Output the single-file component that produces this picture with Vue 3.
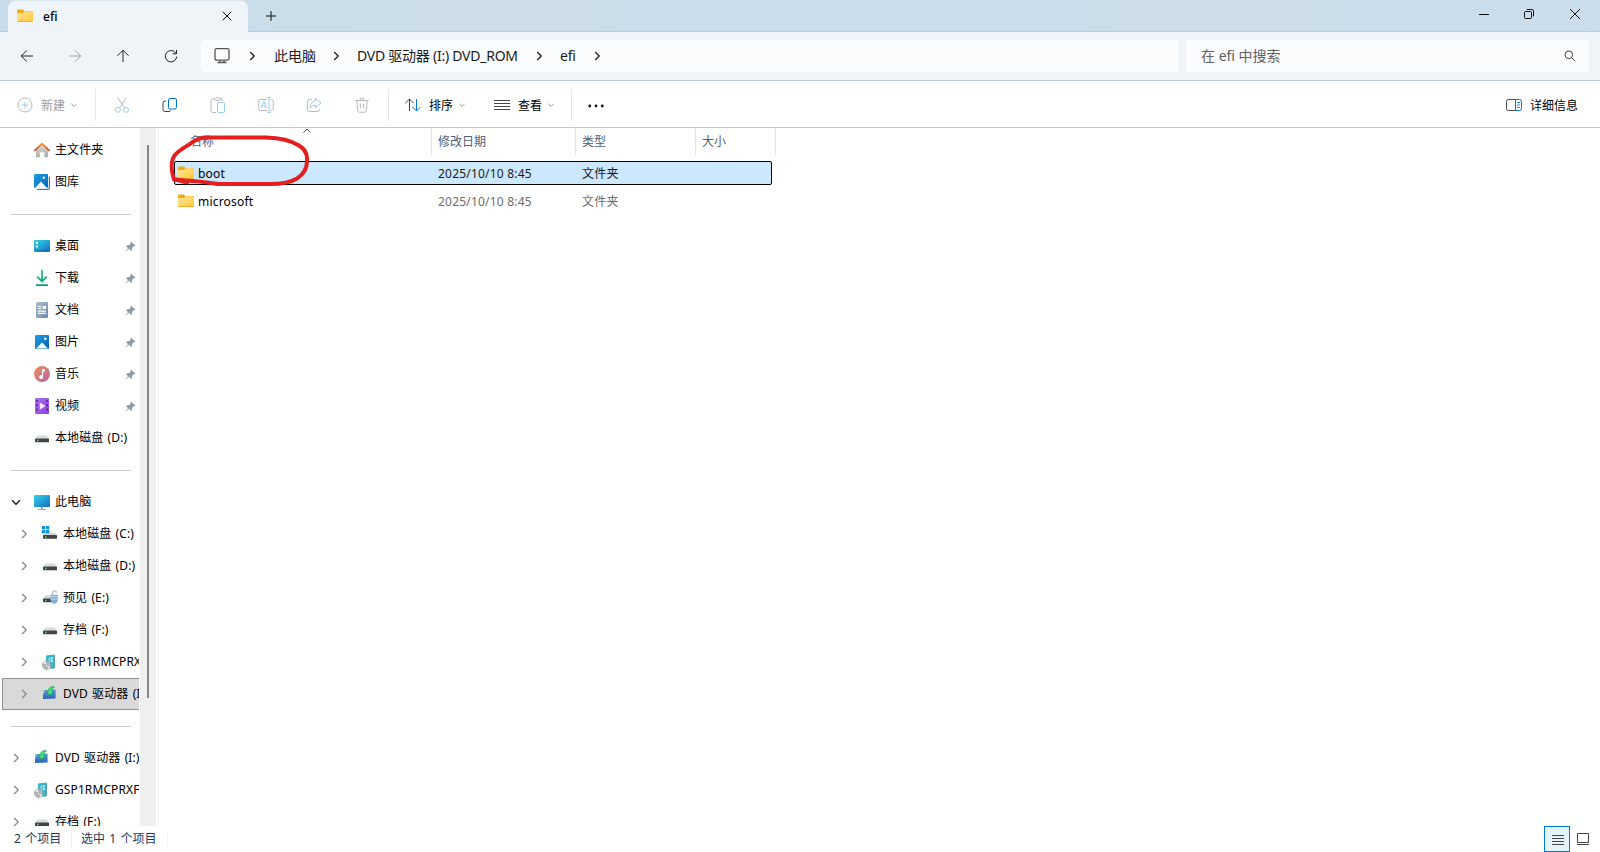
<template>
  <div class="explorer">
    <svg class="sprite" aria-hidden="true">
      <defs>
        <linearGradient id="g-folder" x1="0" y1="0" x2="1" y2="1">
          <stop offset="0" stop-color="#ffe59a" />
          <stop offset="1" stop-color="#ffc938" />
        </linearGradient>
        <linearGradient id="g-blue" x1="0" y1="0" x2="1" y2="1">
          <stop offset="0" stop-color="#35d3e6" />
          <stop offset="1" stop-color="#1270c0" />
        </linearGradient>
        <linearGradient id="g-pic" x1="0" y1="0" x2="1" y2="1">
          <stop offset="0" stop-color="#1e9fe8" />
          <stop offset="1" stop-color="#0563b4" />
        </linearGradient>
        <linearGradient id="g-house" x1="0" y1="0" x2="0" y2="1">
          <stop offset="0" stop-color="#dedede" />
          <stop offset="1" stop-color="#a9a9ad" />
        </linearGradient>
        <linearGradient id="g-roof" x1="0" y1="0" x2="0" y2="1">
          <stop offset="0" stop-color="#f29a1f" />
          <stop offset="1" stop-color="#d0491d" />
        </linearGradient>
        <linearGradient id="g-music" x1="0" y1="0" x2="1" y2="1">
          <stop offset="0" stop-color="#f0935a" />
          <stop offset="1" stop-color="#b9609f" />
        </linearGradient>
        <linearGradient id="g-doc" x1="0" y1="0" x2="1" y2="1">
          <stop offset="0" stop-color="#abc1d8" />
          <stop offset="1" stop-color="#6b88a8" />
        </linearGradient>
        <linearGradient id="g-video" x1="0" y1="0" x2="1" y2="1">
          <stop offset="0" stop-color="#b06ef0" />
          <stop offset="1" stop-color="#8745dc" />
        </linearGradient>
        <linearGradient id="g-down" x1="0" y1="0" x2="0" y2="1">
          <stop offset="0" stop-color="#2cc391" />
          <stop offset="1" stop-color="#0e9d86" />
        </linearGradient>
        <linearGradient id="g-dvd" x1="0" y1="0" x2="0" y2="1">
          <stop offset="0" stop-color="#5b9be0" />
          <stop offset="1" stop-color="#2f62b5" />
        </linearGradient>
      </defs>

      <symbol id="i-folder" viewBox="0 0 16 16">
        <path d="M0 2.700a1.200 1.200 0 0 1 1.200-1.200h4.600L7.600 3h7.200A1.200 1.200 0 0 1 16 4.200V8H0z" fill="#f3ab10" />
        <path d="M0 6a1 1 0 0 1 1-1h5l1.700-1.700h7.200A1.100 1.100 0 0 1 16 4.400V12.700a1.200 1.200 0 0 1-1.200 1.200H1.200A1.200 1.200 0 0 1 0 12.700z" fill="url(#g-folder)" />
        <path d="M.2 13.300q.4.700 1 .7h13.600q.7 0 1-.7z" fill="#e5a323" />
      </symbol>
      <symbol id="i-home" viewBox="0 0 16 16">
        <path d="M2 7.300 8 2l6 5.300v7.200a.8.8 0 0 1-.8.8h-2.900v-5H5.800v5H2.800a.8.8 0 0 1-.8-.8z" fill="url(#g-house)" />
        <path d="M.9 8.300 8 1.600l7.100 6.700" fill="none" stroke="url(#g-roof)" stroke-width="1.800" stroke-linecap="round" stroke-linejoin="round" />
      </symbol>
      <symbol id="i-gallery" viewBox="0 0 16 16">
        <path d="M14 2.400h1a1 1 0 0 1 1 1V14a2 2 0 0 1-2 2H4a1 1 0 0 1-1-1v-.6h11z" fill="#2b76b8" />
        <rect width="14" height="14" rx="1" fill="url(#g-pic)" />
        <path d="M14.500 2v12.400H3" fill="none" stroke="#fff" stroke-width=".8" />
        <path d="m1 14 6-6.600L13 14z" fill="#f4faff" />
        <circle cx="9.800" cy="3.800" r="1.200" fill="#fff" />
      </symbol>
      <symbol id="i-desktop" viewBox="0 0 16 16">
        <rect y="2" width="16" height="12" rx="1" fill="url(#g-blue)" />
        <path d="M2 4h2v2H2zm0 3.500h2v2H2z" fill="#e9fbff" />
        <path d="M.8 12.600h14.400" stroke="#155c92" stroke-width="1" stroke-dasharray="1.400 1" />
      </symbol>
      <symbol id="i-download" viewBox="0 0 16 16">
        <path d="M8 0v11M3.200 6.700 8 11.400l4.800-4.700M2 15.100h12" fill="none" stroke="url(#g-down)" stroke-width="1.800" />
      </symbol>
      <symbol id="i-document" viewBox="0 0 16 16">
        <rect x="2" width="12" height="16" rx="1.200" fill="url(#g-doc)" />
        <path d="M4 4h3.400v1H4zm0 2h3.400v1H4zm4.800-2H12v3H8.800zM4 8.600h8v1.100H4zm0 2.200h8v1.100H4z" fill="#fff" />
      </symbol>
      <symbol id="i-picture" viewBox="0 0 16 16">
        <rect x="1" y="1" width="14" height="14" rx="1" fill="url(#g-pic)" />
        <path d="m2 14.600 6-6.200 6 6.200z" fill="#f4faff" />
        <circle cx="11.300" cy="4.700" r="1.300" fill="#fff" />
      </symbol>
      <symbol id="i-music" viewBox="0 0 16 16">
        <circle cx="8" cy="8" r="8" fill="url(#g-music)" />
        <path d="M8 3.200h3v2.200H9.200V11a2 2 0 1 1-1.200-1.800z" fill="#fff" />
      </symbol>
      <symbol id="i-video" viewBox="0 0 16 16">
        <rect x="1" width="14" height="16" rx="1" fill="url(#g-video)" />
        <path d="M3 2v13M13 2v13" stroke="#4b2392" stroke-width="1.600" stroke-dasharray="2 2.300" />
        <path d="M5.800 4.500 11.600 8l-5.800 3.600z" fill="#f5ecff" />
      </symbol>
      <symbol id="i-drive" viewBox="0 0 16 16">
        <path d="M3.500 5.500h9L15 9H1z" fill="#d9dadb" />
        <rect x="1" y="8.500" width="14" height="3.700" rx=".6" fill="#424446" />
        <path d="M3 9.800h1.500v1.500H3z" fill="#35e36a" />
      </symbol>
      <symbol id="i-system" viewBox="0 0 16 16">
        <path d="M3 6.500h10L15 9.500H1z" fill="#d3d5d6" />
        <rect x="1" y="9" width="14" height="3.700" rx=".6" fill="#424446" />
        <path d="M3 10.300h1.500v1.500H3z" fill="#35e36a" />
        <path d="M0 0h3.300v3.300H0zm4 0h3.300v3.300H4zM0 4h3.300v3.300H0zm4 0h3.300v3.300H4z" fill="#0f8fe0" />
      </symbol>
      <symbol id="i-locked" viewBox="0 0 16 16">
        <path d="M3.500 5.500h9L14 9H1z" fill="#cfd1d3" />
        <rect x="1" y="8.500" width="11" height="3.700" rx=".6" fill="#424446" />
        <path d="M3 9.800h1.500v1.500H3z" fill="#35e36a" />
        <path d="M10.500 5V2.800a2 2 0 0 1 4 0" fill="none" stroke="#b4bdc6" stroke-width="1.200" />
        <path d="M8.500 4.800H16V9q0 3.500-3.800 5Q8.500 12.500 8.500 9z" fill="#78afd9" />
        <path d="M8.500 6.500H16M8.500 9H16" stroke="#d9e9f4" stroke-width=".8" />
      </symbol>
      <symbol id="i-pc" viewBox="0 0 16 16">
        <rect y="1" width="16" height="12" rx=".8" fill="url(#g-blue)" />
        <path d="M7 13h2v2h3v1H4v-1h3z" fill="#9ba9b5" />
      </symbol>
      <symbol id="i-disc" viewBox="0 0 16 16">
        <path d="M4 1.500 12 .5v14L4 15z" fill="#3bb5cb" />
        <path d="m12 .5.8 1v12.600l-.8.400z" fill="#1f86a4" />
        <path d="m6.500 4 2-.4v2l-2 .4zm2.500-.5 2-.4v2.200l-2 .4zM6.500 6.500l2-.3v2l-2 .3zm2.500-.4 2-.3V8l-2 .3z" fill="#9ce6ef" />
        <circle cx="4.700" cy="11.200" r="4.200" fill="#b5b9bd" stroke="#8a8f94" stroke-width=".6" />
        <path d="m4.700 11.200-3.500-2.300 2-1.700z" fill="#f5f6f7" />
        <path d="m4.700 11.200 3.700 1.800-1.800 2z" fill="#e9ebed" />
        <circle cx="4.700" cy="11.200" r="1.200" fill="#fff" stroke="#777" stroke-width=".6" />
      </symbol>
      <symbol id="i-dvd" viewBox="0 0 16 16">
        <path d="M1 4.500 13.600 3.500v9L1 13z" fill="url(#g-dvd)" />
        <path d="M1 4.500 3.500 4.300 1 9z" fill="#8cbcee" />
        <path d="M11.500.5Q7 .5 6.200 4.800L4 4.600 7.500 9.300l4.700-4-2.400-.2Q9.500 2 12.500 1.200z" fill="#3fe07a" stroke="#18a149" stroke-width=".7" />
      </symbol>
      <symbol id="i-pin" viewBox="0 0 12 12">
        <path d="m7 .8 4.200 4.200-1 .9-.8-.1-1.700 1.700-.2 2.300-1 1-2.400-2.300L.9 11.400.6 11.200l2.700-3.400L1.200 5.500l1-1 2.400-.2L6.200 2.600 6.100 1.700z" fill="#939ca6" />
      </symbol>
      <symbol id="i-right" viewBox="0 0 10 10">
        <path d="m3.200 1 4 4-4 4" fill="none" stroke="currentColor" stroke-width="1.300" />
      </symbol>
      <symbol id="i-down" viewBox="0 0 10 10">
        <path d="m1 3.200 4 4 4-4" fill="none" stroke="currentColor" stroke-width="1.500" />
      </symbol>
      <symbol id="i-small-down" viewBox="0 0 6 6">
        <path d="m.4 1.800 2.600 2.600 2.600-2.600" fill="none" stroke="#999" stroke-width="1" />
      </symbol>
    </svg>

    <header class="titlebar">
      <div class="tab">
        <svg class="icon"><use href="#i-folder" /></svg>
        <span class="tab-title">efi</span>
        <svg class="tab-close" viewBox="0 0 10 10"><path d="m.7.7 8.600 8.600m0-8.600L.7 9.300" /></svg>
      </div>
      <svg class="tab-add" viewBox="0 0 10 10"><path d="M5 0v10M0 5h10" /></svg>
      <div class="window-buttons">
        <svg viewBox="0 0 12 12"><path d="M1 6.500h10" /></svg>
        <svg viewBox="0 0 12 12">
          <rect x="1.500" y="3.500" width="7" height="7" rx="1" />
          <path d="M3.800 1.500h5a1.700 1.700 0 0 1 1.700 1.700v5.200" />
        </svg>
        <svg viewBox="0 0 12 12"><path d="m1 1 10 10M11 1 1 11" /></svg>
      </div>
    </header>

    <nav class="navbar">
      <div class="nav-buttons">
        <svg viewBox="0 0 14 14"><path d="M13 7H1.200m5.600-5.600L1.200 7l5.600 5.600" /></svg>
        <svg class="muted" viewBox="0 0 14 14"><path d="M1 7h11.800M7.200 1.400 12.800 7l-5.600 5.600" /></svg>
        <svg viewBox="0 0 14 14"><path d="M7 13V1.200M1.400 6.800 7 1.200l5.600 5.600" /></svg>
        <svg viewBox="0 0 14 14"><path d="M12.700 7.500A5.700 5.700 0 1 1 11.300 3.500L12.500 4.800M12.500 1v3.800H8.700" /></svg>
      </div>
      <div class="address">
        <svg class="monitor" viewBox="0 0 16 16">
          <rect x="1" y=".7" width="14" height="11.500" rx="1.500" />
          <path d="M6 12.500v2M10 12.500v2M3.500 14.500h9" />
        </svg>
        <svg class="sep"><use href="#i-right" /></svg>
        <span class="crumb-pc">此电脑</span>
        <svg class="sep"><use href="#i-right" /></svg>
        <span class="crumb-dvd">DVD 驱动器 (I:) DVD_ROM</span>
        <svg class="sep"><use href="#i-right" /></svg>
        <span class="crumb-efi">efi</span>
        <svg class="sep"><use href="#i-right" /></svg>
      </div>
      <div class="search">
        <span>在 efi 中搜索</span>
        <svg viewBox="0 0 12 12"><circle cx="4.800" cy="4.800" r="3.800" /><path d="m7.600 7.600 3.800 3.800" /></svg>
      </div>
    </nav>

    <div class="toolbar">
      <div class="tool-new">
        <svg class="tool" viewBox="0 0 16 16">
          <circle cx="8" cy="8" r="7" class="gray" /><path d="M8 4.500v7M4.500 8h7" class="pale" />
        </svg>
        <span>新建</span>
        <svg class="caret"><use href="#i-small-down" /></svg>
      </div>
      <div class="tool-group">
        <svg class="tool" viewBox="0 0 16 16">
          <path d="m3.500.5 6.800 10M12.500.5l-6.800 10" class="gray" />
          <circle cx="3.900" cy="12.800" r="2.500" class="pale" /><circle cx="12.100" cy="12.800" r="2.500" class="pale" />
        </svg>
        <svg class="tool" viewBox="0 0 16 16">
          <path d="M4 4H3a2 2 0 0 0-2 2v6.500a2 2 0 0 0 2 2h4a2 2 0 0 0 1.800-1.200" class="dark" />
          <rect x="6.500" y="1.500" width="8" height="10.500" rx="1.500" class="blue" />
        </svg>
        <svg class="tool" viewBox="0 0 16 16">
          <path d="M5 2H2.500A1.500 1.500 0 0 0 1 3.500V14a1.500 1.500 0 0 0 1.500 1.500H6M10 2h1.500a1.200 1.200 0 0 1 1.200 1.200V4" class="gray" />
          <rect x="4.500" y=".7" width="6" height="2.600" rx="1.200" class="gray" />
          <rect x="7.500" y="5.500" width="7" height="10" rx=".8" class="pale" />
        </svg>
        <svg class="tool" viewBox="0 0 16 16">
          <path d="M9 2.500H2.500A1.800 1.800 0 0 0 .7 4.300v7.400a1.800 1.800 0 0 0 1.800 1.800H9M13 2.500q2.300 0 2.300 2v7q0 2-2.300 2" class="gray" />
          <path d="m3 11 2.800-6.500L8.600 11M4 9h3.800M11 .7v14.600M9 .7h4M9 15.300h4" class="pale" />
        </svg>
        <svg class="tool" viewBox="0 0 16 16">
          <path d="M6 2.500H3.500a2 2 0 0 0-2 2v8a2 2 0 0 0 2 2h8a2 2 0 0 0 2-2V12" class="gray" />
          <path d="M9.500 1.300 15 6l-5.500 4.700V8q-3.500 0-5.500 3Q4.300 4.500 9.500 4z" class="pale" />
        </svg>
        <svg class="tool" viewBox="0 0 16 16">
          <path d="M1.300 3.500h13.400M5.800 3.300q0-2.200 2.200-2.200t2.200 2.200M2.800 3.500l.9 10q.1 1.700 1.600 1.700h5.400q1.500 0 1.600-1.700l.9-10M6.300 6.500v5M9.700 6.500v5" class="gray" />
        </svg>
      </div>
      <div class="tool-view">
        <svg class="tool" viewBox="0 0 16 16">
          <path d="M4.500 14V2M.3 6.200 4.500 2l4.200 4.200" class="dark" />
          <path d="M11.500 2v12M7.500 10l4 4 4-4" class="blue" />
        </svg>
        <span class="sort-label">排序</span>
        <svg class="caret"><use href="#i-small-down" /></svg>
        <svg class="tool lines" viewBox="0 0 16 16">
          <path d="M0 3.500h16M0 6.500h16M0 9.500h16M0 12.500h16" class="dark" />
        </svg>
        <span class="sort-label">查看</span>
        <svg class="caret"><use href="#i-small-down" /></svg>
      </div>
      <svg class="dots" viewBox="0 0 16 4">
        <circle cx="1.700" cy="2" r="1.400" /><circle cx="8" cy="2" r="1.400" /><circle cx="14.300" cy="2" r="1.400" />
      </svg>
      <div class="details">
        <svg class="tool" viewBox="0 0 16 16">
          <path d="M9.500 2.500h-7a2 2 0 0 0-2 2v7a2 2 0 0 0 2 2h7" class="dark" />
          <path d="M9.500 2.500h4a2 2 0 0 1 2 2v7a2 2 0 0 1-2 2h-4zM11.300 5.500h2.500M11.300 8h2.500M11.300 10.500h2.500" class="blue" />
        </svg>
        <span>详细信息</span>
      </div>
    </div>

    <main class="body">
      <aside class="sidebar">
        <div class="tree">
          <template v-for="(item, i) in tree" :key="i">
            <div v-if="item.divider" class="divider"><i></i></div>
            <div v-else :class="['node', { nested: item.nested, selected: item.selected }]">
              <span class="arrow">
                <svg v-if="item.arrow" :class="{ open: item.arrow === 'down' }"><use :href="'#i-' + item.arrow" /></svg>
              </span>
              <svg class="icon"><use :href="'#i-' + item.icon" /></svg>
              <span class="node-label">{{ item.label }}</span>
              <svg v-if="item.pinned" class="pin"><use href="#i-pin" /></svg>
            </div>
          </template>
        </div>
        <div class="scrollbar"><div class="thumb"></div></div>
      </aside>

      <section class="files">
        <div class="columns">
          <span>名称</span>
          <span>修改日期</span>
          <span>类型</span>
          <span>大小</span>
          <svg class="sort-mark" viewBox="0 0 8 5"><path d="M.5 4.500 4 1l3.500 3.500" /></svg>
        </div>
        <div v-for="file in files" :key="file.name" :class="['file', { active: file.active }]">
          <span class="file-name">
            <svg class="icon"><use href="#i-folder" /></svg>
            <span>{{ file.name }}</span>
          </span>
          <span class="file-meta">{{ file.date }}</span>
          <span class="file-meta">{{ file.type }}</span>
        </div>
        <svg class="ink" viewBox="0 0 144 56">
          <path d="M5.500 49C3 40 3 31 7 26C12 20 18 18 24 13.500Q31 8.500 38 8.500L98 8.500Q119 9 131 16.500Q140 22 139 32Q139 43 129 49.500Q119 55.500 100 55L50 55Q31 52 17 51.500L6 50.500" />
          <path d="M8 50.500 19 53.500" />
        </svg>
      </section>
    </main>

    <footer class="status">
      <span class="count">2 个项目</span>
      <span class="picked">选中 1 个项目</span>
      <div class="modes">
        <span class="mode on"><svg viewBox="0 0 12 12"><path d="M0 1.500h12M0 4.500h12M0 7.500h12M0 10.500h12" /></svg></span>
        <span class="mode"><svg viewBox="0 0 12 12"><path d="M.5.5h11v9H.5zM0 11.500h12" /></svg></span>
      </div>
    </footer>
  </div>
</template>

<script setup>
const tree = [
  { label: '主文件夹', icon: 'home' },
  { label: '图库', icon: 'gallery' },
  { divider: true },
  { label: '桌面', icon: 'desktop', pinned: true },
  { label: '下载', icon: 'download', pinned: true },
  { label: '文档', icon: 'document', pinned: true },
  { label: '图片', icon: 'picture', pinned: true },
  { label: '音乐', icon: 'music', pinned: true },
  { label: '视频', icon: 'video', pinned: true },
  { label: '本地磁盘 (D:)', icon: 'drive' },
  { divider: true },
  { label: '此电脑', icon: 'pc', arrow: 'down' },
  { label: '本地磁盘 (C:)', icon: 'system', arrow: 'right', nested: true },
  { label: '本地磁盘 (D:)', icon: 'drive', arrow: 'right', nested: true },
  { label: '预见 (E:)', icon: 'locked', arrow: 'right', nested: true },
  { label: '存档 (F:)', icon: 'drive', arrow: 'right', nested: true },
  { label: 'GSP1RMCPRXF', icon: 'disc', arrow: 'right', nested: true },
  { label: 'DVD 驱动器 (I:)', icon: 'dvd', arrow: 'right', nested: true, selected: true },
  { divider: true },
  { label: 'DVD 驱动器 (I:)', icon: 'dvd', arrow: 'right' },
  { label: 'GSP1RMCPRXF', icon: 'disc', arrow: 'right' },
  { label: '存档 (F:)', icon: 'drive', arrow: 'right' }
]

const files = [
  { name: 'boot', date: '2025/10/10 8:45', type: '文件夹', active: true },
  { name: 'microsoft', date: '2025/10/10 8:45', type: '文件夹' }
]
</script>

<style>
body {
  margin: 0;
  overflow: hidden;
}
</style>

<style scoped>
.explorer {
  display: flex;
  flex-direction: column;
  height: 852px;
  background: #fff;
  color: #000;
  font: 12px/16px 'Noto Sans', 'Noto Sans CJK SC', sans-serif;
  white-space: nowrap;
  box-sizing: border-box;
}

.explorer * {
  box-sizing: border-box;
}

svg {
  display: block;
  flex: none;
  fill: none;
}

.sprite {
  position: absolute;
  width: 0;
  height: 0;
}

.icon {
  width: 16px;
  height: 16px;
}

/* 标题栏 */
.titlebar {
  display: flex;
  height: 32px;
  flex: none;
  padding-left: 8px;
  background: linear-gradient(90deg, #c9dcea, #cddce9 35%, #c9ddea 42%, #c9ddea 65%, #cddce9 72%, #cadeeb);
  border-bottom: 1px solid #b9cddb;
  stroke: #111;
}

.titlebar .icon {
  stroke: none;
}

.tab {
  display: flex;
  align-items: center;
  width: 240px;
  height: 32px;
  padding: 0 16px 1px 9px;
  background: #eff4f9;
  border-top: 1px solid #dce8f1;
  border-radius: 8px 8px 0 0;
}

.tab-title {
  flex: 1;
  padding: 2px 0 0 10px;
  font-weight: 500;
}

.tab-close {
  width: 10px;
  height: 10px;
}

.tab-add {
  width: 10px;
  height: 10px;
  margin: 11px 0 0 18px;
}

.window-buttons {
  display: flex;
  gap: 33px;
  margin: 8px 19px 0 auto;
}

.window-buttons svg {
  width: 12px;
  height: 12px;
}

.window-buttons svg:nth-child(2) {
  margin-right: 1px;
}

/* 导航栏 */
.navbar {
  display: flex;
  align-items: center;
  flex: none;
  height: 49px;
  padding-right: 11px;
  background: #eff4f9;
  border-bottom: 1px solid #b9cddb;
  font-size: 14px;
  line-height: 20px;
}

.nav-buttons {
  display: flex;
  gap: 34px;
  width: 201px;
  padding-left: 20px;
  stroke: #222;
}

.nav-buttons svg {
  width: 14px;
  height: 14px;
}

.nav-buttons .muted {
  stroke: #a5a8ab;
}

.address,
.search {
  display: flex;
  align-items: center;
  height: 32px;
  background: #fbfcfe;
  border-radius: 4px;
}

.address {
  width: 977px;
  padding-left: 13px;
  color: #1b1b1b;
}

.monitor {
  width: 16px;
  height: 16px;
  margin-right: 17px;
  stroke: #555;
  stroke-width: 1.3;
}

.sep {
  width: 10px;
  height: 10px;
}

.crumb-pc {
  width: 74px;
  padding-left: 17px;
}

.crumb-dvd {
  width: 193px;
  padding-left: 16px;
  letter-spacing: -0.25px;
}

.crumb-efi {
  width: 48px;
  padding-left: 16px;
  letter-spacing: -0.25px;
}

.search {
  flex: 1;
  justify-content: space-between;
  margin-left: 8px;
  padding: 0 13px 0 15px;
  color: #5f6062;
}

.search svg {
  width: 12px;
  height: 12px;
  stroke: #444;
}

/* 工具栏 */
.toolbar {
  display: flex;
  align-items: center;
  flex: none;
  height: 47px;
  padding-top: 2px;
  border-bottom: 1px solid #b9cddb;
}

.toolbar span {
  padding-top: 1px;
}

.tool {
  width: 16px;
  height: 16px;
}

.gray {
  stroke: #b9b9b9;
}

.pale {
  stroke: #9bcbef;
}

.dark {
  stroke: #444;
}

.blue {
  stroke: #0078d4;
}

.caret {
  width: 6px;
  height: 6px;
}

.tool-new,
.tool-group,
.tool-view {
  display: flex;
  align-items: center;
  height: 32px;
  border-right: 1px solid #e6e6e6;
}

.tool-new {
  width: 96px;
  padding-left: 17px;
  color: #9c9c9c;
}

.tool-new span {
  margin: 0 6px 0 8px;
}

.tool-group {
  width: 293px;
  padding-left: 18px;
  gap: 32px;
}

.tool-view {
  width: 183px;
  padding-left: 16px;
}

.sort-label {
  margin: 0 6px 0 8px;
}

.lines {
  margin-left: 29px;
}

.dots {
  width: 16px;
  height: 4px;
  margin: 2px 0 0 16px;
  fill: #111;
}

.details {
  display: flex;
  gap: 8px;
  margin-left: auto;
  padding-right: 22px;
}

/* 主体 */
.body {
  display: flex;
  flex: none;
  height: 698px;
}

.sidebar {
  display: flex;
  width: 159px;
  border-right: 1px solid #f0f0f0;
}

.tree {
  width: 140px;
  padding: 6px 1px 0 0;
  overflow: hidden;
}

.node,
.divider {
  display: flex;
  align-items: center;
  height: 32px;
}

.divider {
  padding: 0 8px 0 10px;
}

.divider i {
  width: 100%;
  height: 1px;
  background: #d0d0d0;
}

.node {
  padding-left: 2px;
  overflow: hidden;
}

.node.nested {
  padding-left: 10px;
}

.node.selected {
  margin-left: 2px;
  padding-left: 7px;
  background: #d9d9d9;
  border: 1px solid #919191;
  border-right: 0;
}

.arrow {
  width: 32px;
  flex: none;
  padding-left: 9px;
  color: #8a8a8a;
}

.arrow svg {
  width: 10px;
  height: 10px;
}

.arrow .open {
  color: #222;
}

.node-label {
  padding-left: 5px;
  letter-spacing: 0.1px;
  word-spacing: 1px;
}

.pin {
  width: 11px;
  height: 11px;
  margin: 0 3px 0 auto;
}

.scrollbar {
  width: 16px;
  padding: 17px 0 0 7px;
  background: #efefef;
}

.thumb {
  width: 2px;
  height: 553px;
  background: #858585;
}

/* 文件列表 */
.files {
  position: relative;
  flex: 1;
  padding-left: 15px;
}

.columns,
.file {
  display: grid;
  grid-template-columns: 258px 144px 120px 80px;
}

.columns {
  height: 27px;
  margin-bottom: 6px;
  color: #4c607a;
}

.columns span {
  padding: 6px 0 0 6px;
  border-right: 1px solid #e5e5e5;
}

.columns span:first-child {
  padding-left: 16px;
}

.file {
  width: 598px;
  height: 24px;
  margin-bottom: 4px;
  align-items: center;
  border: 1px solid transparent;
  border-radius: 2px;
}

.file.active {
  background: #cce8ff;
  border-color: #000;
}

.file-name {
  display: flex;
  gap: 4px;
  padding-left: 3px;
  letter-spacing: 0.2px;
}

.file-name span {
  padding-top: 1px;
}

.file-meta {
  padding: 2px 0 0 5px;
  letter-spacing: 0.2px;
  color: #6d6d6d;
}

.active .file-meta {
  color: #1b1b1b;
}

.sort-mark {
  position: absolute;
  left: 144px;
  top: 0;
  width: 8px;
  height: 5px;
  stroke: #555;
}

/* 手绘红圈 */
.ink {
  position: absolute;
  left: 9px;
  top: 1px;
  width: 144px;
  height: 56px;
  overflow: visible;
  stroke: #e51f20;
  stroke-width: 4;
  stroke-linecap: round;
  stroke-linejoin: round;
}

/* 状态栏 */
.status {
  display: flex;
  align-items: center;
  flex: none;
  height: 26px;
  padding-left: 14px;
  color: #1e395b;
  word-spacing: 1.2px;
}

.count {
  width: 58px;
  border-right: 1px solid #eee;
}

.picked {
  width: 96px;
  padding-left: 9px;
  border-right: 1px solid #f5f5f5;
}

.modes {
  display: flex;
  margin-left: auto;
  padding-right: 4px;
}

.mode {
  display: flex;
  align-items: center;
  justify-content: center;
  width: 26px;
  height: 26px;
  stroke: #444;
}

.mode svg {
  width: 12px;
  height: 12px;
}

.mode.on {
  padding: 2px 0 0 2px;
  background: #e5f3fb;
  border: 1px solid #0078d7;
}
</style>
